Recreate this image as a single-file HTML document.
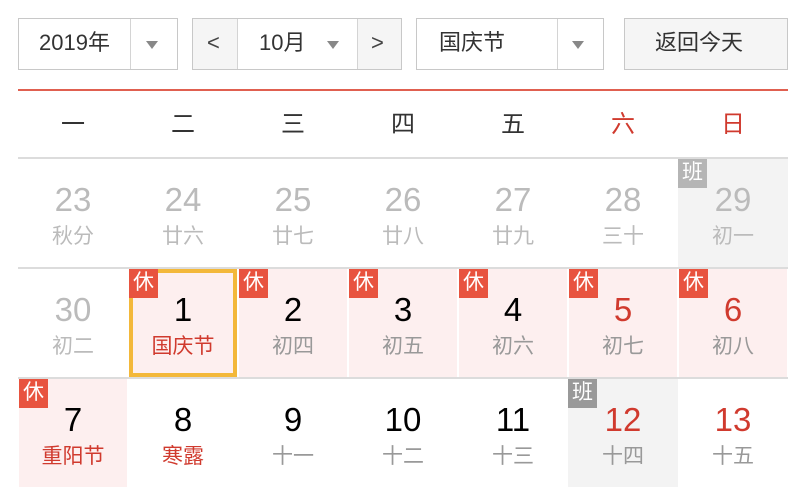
<!DOCTYPE html>
<html><head><meta charset="utf-8"><style>
*{margin:0;padding:0;box-sizing:border-box}
body{width:808px;height:488px;background:#fff;font-family:"Liberation Sans","Noto Sans CJK SC",sans-serif;position:relative;overflow:hidden}
.box{position:absolute;top:18px;height:52px;border:1px solid #c8c8c8;font-size:22px;color:#333}
.box span{position:absolute;top:10px;line-height:28px}
.div{position:absolute;top:0;bottom:0;width:1px;background:#d4d4d4}
.tri{position:absolute;top:22px;width:0;height:0;border-left:6px solid transparent;border-right:6px solid transparent;border-top:8px solid #888}
.wk{position:absolute;top:110px;width:110px;text-align:center;font-size:24px;color:#333;line-height:30px}
.cell{position:absolute;width:110px;height:108px;text-align:center}
.n{position:absolute;top:21px;left:0;right:0;font-size:33px;color:#000;line-height:40px}
.l{position:absolute;top:64px;left:0;right:0;font-size:21px;color:#999;line-height:28px}
.g .n,.g .l{color:#bbb}
.r .n{color:#d03a2e}
.h .l{color:#d03a2e}
.pink{background:#fdefef;border-left:1px solid #fff;border-right:1px solid #fff}
.gray{background:#f3f3f3}
.b{position:absolute;left:0;top:0;width:29px;height:29px;color:#fff;font-size:21px;line-height:28px;text-align:center;background:#e8533f}
.b.ban{background:#b5b5b5}
.line{position:absolute;left:18px;width:770px;height:2px;background:#dcdcdc}
</style></head><body>
<div class="box" style="left:18px;width:160px"><span style="left:20px">2019年</span><div class="div" style="left:111px"></div><div class="tri" style="left:127px"></div></div>
<div class="box" style="left:192px;width:210px;background:#f5f5f5"><span style="left:14px;color:#444">&lt;</span><div class="div" style="left:44px"></div><div style="position:absolute;left:45px;width:120px;top:0;bottom:0;background:#fff"></div><span style="left:66px">10月</span><div class="tri" style="left:134px"></div><div class="div" style="left:164px"></div><span style="left:178px;color:#444">&gt;</span></div>
<div class="box" style="left:416px;width:188px"><span style="left:22px">国庆节</span><div class="div" style="left:140px"></div><div class="tri" style="left:155px"></div></div>
<div class="box" style="left:624px;width:164px;background:#f5f5f5"><span style="left:30px">返回今天</span></div>
<div style="position:absolute;left:18px;top:89px;width:770px;height:2px;background:#e06050"></div>
<div class="wk" style="left:18px">一</div><div class="wk" style="left:128px">二</div><div class="wk" style="left:238px">三</div><div class="wk" style="left:348px">四</div><div class="wk" style="left:458px">五</div><div class="wk" style="left:568px;color:#d03a2e">六</div><div class="wk" style="left:678px;color:#d03a2e">日</div>
<div class="line" style="top:157px"></div>
<div class="line" style="top:267px"></div>
<div class="line" style="top:377px"></div>
<!-- row1 -->
<div class="cell g" style="left:18px;top:159px"><div class="n">23</div><div class="l">秋分</div></div>
<div class="cell g" style="left:128px;top:159px"><div class="n">24</div><div class="l">廿六</div></div>
<div class="cell g" style="left:238px;top:159px"><div class="n">25</div><div class="l">廿七</div></div>
<div class="cell g" style="left:348px;top:159px"><div class="n">26</div><div class="l">廿八</div></div>
<div class="cell g" style="left:458px;top:159px"><div class="n">27</div><div class="l">廿九</div></div>
<div class="cell g" style="left:568px;top:159px"><div class="n">28</div><div class="l">三十</div></div>
<div class="cell g gray" style="left:678px;top:159px"><div class="b ban">班</div><div class="n">29</div><div class="l">初一</div></div>
<!-- row2 -->
<div class="cell g" style="left:18px;top:269px"><div class="n">30</div><div class="l">初二</div></div>
<div class="cell h pink" style="left:128px;top:269px"><div style="position:absolute;left:0;top:0;width:108px;height:108px;border:4px solid #f3b83a"></div><div class="b">休</div><div class="n">1</div><div class="l">国庆节</div></div>
<div class="cell pink" style="left:238px;top:269px"><div class="b">休</div><div class="n">2</div><div class="l">初四</div></div>
<div class="cell pink" style="left:348px;top:269px"><div class="b">休</div><div class="n">3</div><div class="l">初五</div></div>
<div class="cell pink" style="left:458px;top:269px"><div class="b">休</div><div class="n">4</div><div class="l">初六</div></div>
<div class="cell r pink" style="left:568px;top:269px"><div class="b">休</div><div class="n">5</div><div class="l">初七</div></div>
<div class="cell r pink" style="left:678px;top:269px"><div class="b">休</div><div class="n">6</div><div class="l">初八</div></div>
<!-- row3 -->
<div class="cell h pink" style="left:18px;top:379px"><div class="b">休</div><div class="n">7</div><div class="l">重阳节</div></div>
<div class="cell h" style="left:128px;top:379px"><div class="n">8</div><div class="l">寒露</div></div>
<div class="cell" style="left:238px;top:379px"><div class="n">9</div><div class="l">十一</div></div>
<div class="cell" style="left:348px;top:379px"><div class="n">10</div><div class="l">十二</div></div>
<div class="cell" style="left:458px;top:379px"><div class="n">11</div><div class="l">十三</div></div>
<div class="cell r gray" style="left:568px;top:379px"><div class="b ban" style="background:#999">班</div><div class="n">12</div><div class="l">十四</div></div>
<div class="cell r" style="left:678px;top:379px"><div class="n">13</div><div class="l">十五</div></div>
</body></html>
